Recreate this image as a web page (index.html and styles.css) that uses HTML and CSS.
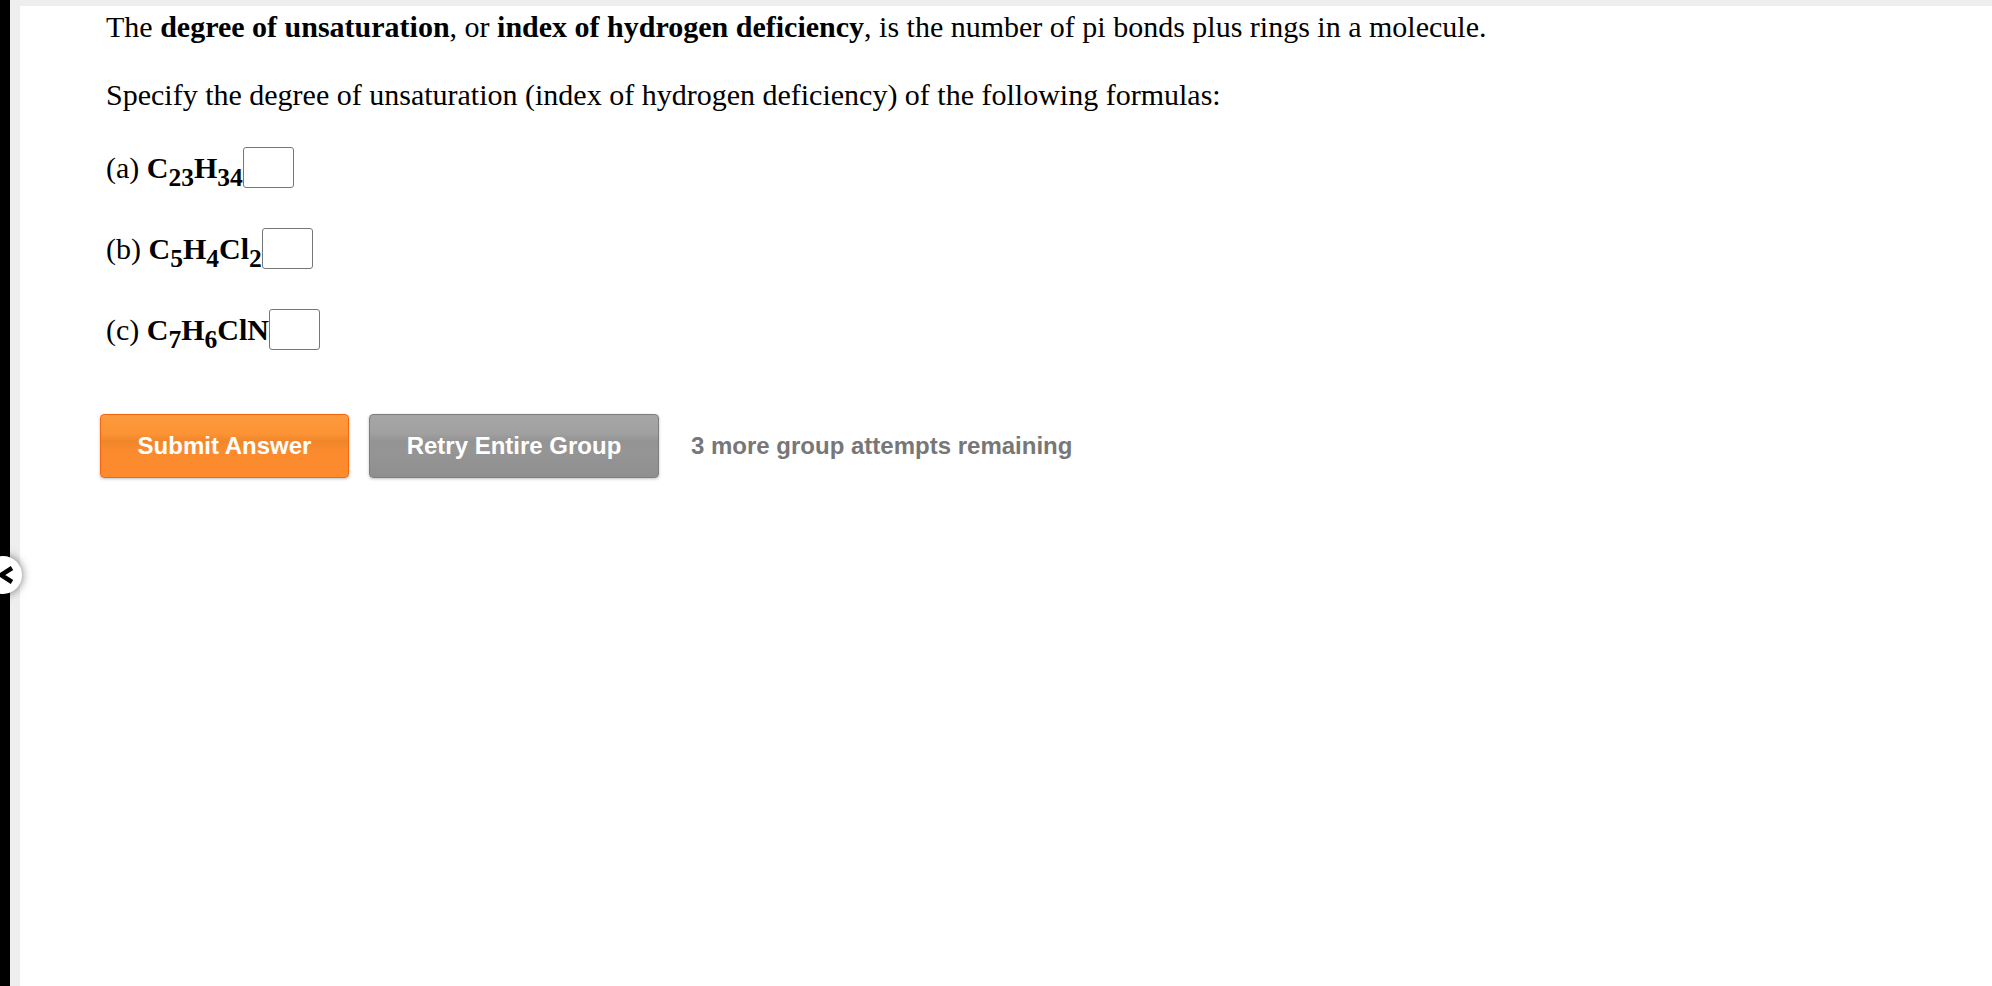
FILE: index.html
```html
<!DOCTYPE html>
<html>
<head>
<meta charset="utf-8">
<link rel="stylesheet" href="styles.css">
</head>
<body>
<div class="rail"></div>
<div class="page">
  <div class="content">
    <p class="intro">The <b>degree of unsaturation</b>, or <b>index of hydrogen deficiency</b>, is the number of pi bonds plus rings in a molecule.</p>
    <p class="prompt">Specify the degree of unsaturation (index of hydrogen deficiency) of the following formulas:</p>
    <p class="item">(a) <b>C<sub>23</sub>H<sub>34</sub></b><span class="box"></span></p>
    <p class="item">(b) <b>C<sub>5</sub>H<sub>4</sub>Cl<sub>2</sub></b><span class="box"></span></p>
    <p class="item">(c) <b>C<sub>7</sub>H<sub>6</sub>ClN</b><span class="box"></span></p>
    <div class="actions">
      <button class="btn btn-submit">Submit Answer</button>
      <button class="btn btn-retry">Retry Entire Group</button>
      <span class="remaining">3 more group attempts remaining</span>
    </div>
  </div>
</div>
<div class="side-toggle">
  <svg width="16" height="20" viewBox="0 0 16 20"><path d="M14 3 L3 10 L14 17" fill="none" stroke="#000" stroke-width="4.5" stroke-linejoin="miter"/></svg>
</div>
</body>
</html>
```

FILE: styles.css
```css
html, body {
  margin: 0;
  height: 100%;
}
body {
  display: flex;
  background: #fff;
  font-family: "Liberation Serif", "Times New Roman", serif;
  color: #000;
  overflow: hidden;
}
.rail {
  width: 10px;
  flex: none;
  background: #000;
}
.page {
  flex: 1;
  background: #eeeeee;
  padding: 6px 0 0 10px;
  display: flex;
}
.content {
  flex: 1;
  background: #fff;
  padding: 5px 0 0 80px;
}
p {
  margin: 0;
  font-size: 30px;
  line-height: 32px;
  padding-left: 6px;
}
.prompt {
  margin-top: 36px;
}
.item {
  margin-top: 36px;
}
.item + .item {
  margin-top: 40px;
}
sub {
  font-size: 0.85em;
  line-height: 0;
  vertical-align: -0.32em;
}
.box {
  display: inline-block;
  box-sizing: border-box;
  width: 51px;
  height: 41px;
  border: 1.5px solid #767676;
  border-radius: 3px;
  vertical-align: -10px;
  background: #fff;
}
.actions {
  display: flex;
  align-items: center;
  margin-top: 64px;
}
.btn {
  box-sizing: border-box;
  height: 64px;
  border-radius: 4px;
  font-family: "Liberation Sans", Arial, sans-serif;
  font-weight: bold;
  font-size: 24px;
  color: #fff;
  padding: 0;
  box-shadow: 0 1px 3px rgba(0,0,0,0.25);
  cursor: pointer;
}
.btn-submit {
  width: 249px;
  border: 1.5px solid #f2670f;
  background: linear-gradient(#fe9a3e 0%, #fc9334 30%, #f0862a 42%, #fb8b2e 58%, #fe8b2d 100%);
}
.btn-retry {
  width: 290px;
  margin-left: 20px;
  border: 1.5px solid #7e7e7e;
  background: linear-gradient(#a6a6a6 0%, #a0a0a0 30%, #939393 42%, #959595 58%, #8f8f8f 100%);
}
.remaining {
  margin-left: 32px;
  font-family: "Liberation Sans", Arial, sans-serif;
  font-weight: bold;
  font-size: 24px;
  color: #777;
}
.side-toggle {
  position: absolute;
  left: -16px;
  top: 556px;
  width: 38px;
  height: 38px;
  border-radius: 50%;
  background: #fff;
  box-shadow: 0 0 10px rgba(0,0,0,0.55);
  display: flex;
  align-items: center;
  justify-content: flex-end;
}
.side-toggle svg {
  margin-right: 8px;
}
```
